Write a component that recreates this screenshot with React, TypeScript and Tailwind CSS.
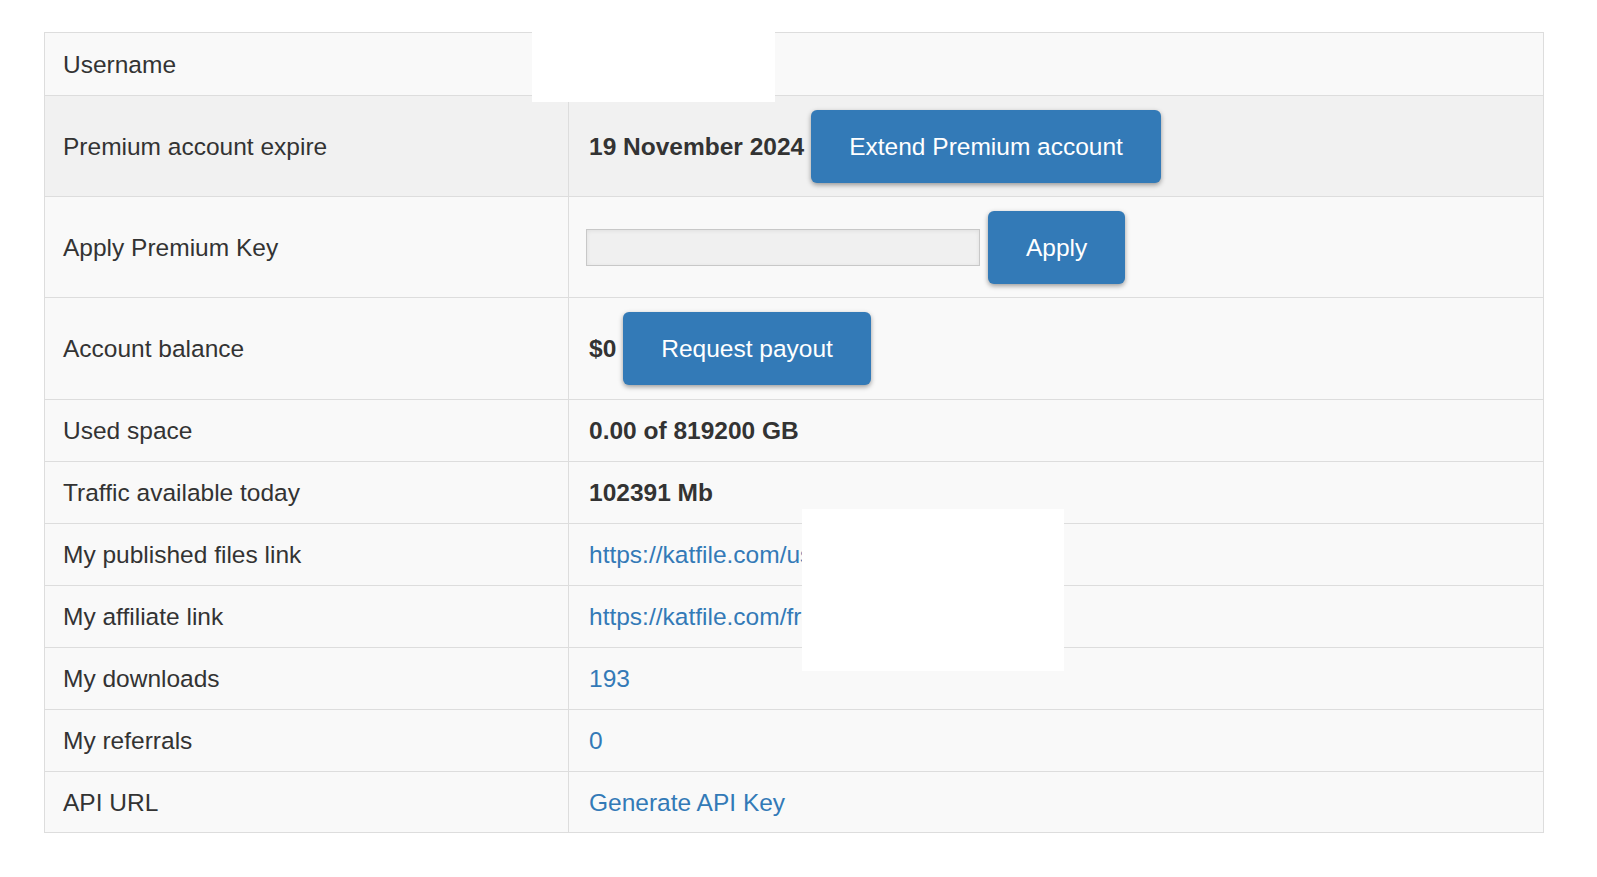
import React from "react";

function Row({
  label,
  h,
  bg,
  first,
  children,
}: {
  label: string;
  h: string;
  bg: string;
  first?: boolean;
  children?: React.ReactNode;
}) {
  return (
    <div className={`flex ${h} ${bg} ${first ? "" : "border-t border-[#dddddd]"}`}>
      <div className="flex w-[523px] shrink-0 items-center pl-[18px]">{label}</div>
      <div className="flex flex-1 items-center border-l border-[#dddddd] pl-[20px]">{children}</div>
    </div>
  );
}

function Btn({ children }: { children: React.ReactNode }) {
  return (
    <button className="rounded-[6px] bg-[#337ab7] px-[38px] py-[19px] text-[24.5px] leading-[35px] text-white shadow-[0_2px_5px_rgba(0,0,0,0.38)]">
      {children}
    </button>
  );
}

export default function App() {
  return (
    <div className="relative min-h-screen bg-white font-['Liberation_Sans',Arial,sans-serif] text-[24.5px] leading-[35px] text-[#333333]">
      <div className="pl-[44px] pt-[32px]">
        <div className="w-[1500px] border border-[#dddddd]">
          <Row label="Username" h="h-[62px]" bg="bg-[#f9f9f9]" first>
            <span></span>
          </Row>
          <Row label="Premium account expire" h="h-[101px]" bg="bg-[#f1f1f1]">
            <div className="flex items-center gap-[7px]">
              <b className="font-bold">19 November 2024</b>
              <Btn>Extend Premium account</Btn>
            </div>
          </Row>
          <Row label="Apply Premium Key" h="h-[101px]" bg="bg-[#f9f9f9]">
            <div className="-ml-[3px] flex items-center gap-[8px]">
              <input
                type="text"
                className="h-[37px] w-[394px] border border-[#c8c8c8] bg-[#f0f0f0] shadow-[inset_0_1px_4px_rgba(0,0,0,0.07)] outline-none"
              />
              <Btn>Apply</Btn>
            </div>
          </Row>
          <Row label="Account balance" h="h-[102px]" bg="bg-[#f9f9f9]">
            <div className="flex items-center gap-[7px]">
              <b className="font-bold">$0</b>
              <Btn>Request payout</Btn>
            </div>
          </Row>
          <Row label="Used space" h="h-[62px]" bg="bg-[#f9f9f9]">
            <b className="font-bold">0.00 of 819200 GB</b>
          </Row>
          <Row label="Traffic available today" h="h-[62px]" bg="bg-[#f9f9f9]">
            <b className="font-bold">102391 Mb</b>
          </Row>
          <Row label="My published files link" h="h-[62px]" bg="bg-[#f9f9f9]">
            <a className="text-[#337ab7]" href="#">https://katfile.com/users/user</a>
          </Row>
          <Row label="My affiliate link" h="h-[62px]" bg="bg-[#f9f9f9]">
            <a className="text-[#337ab7]" href="#">https://katfile.com/free</a>
          </Row>
          <Row label="My downloads" h="h-[62px]" bg="bg-[#f9f9f9]">
            <a className="text-[#337ab7]" href="#">193</a>
          </Row>
          <Row label="My referrals" h="h-[62px]" bg="bg-[#f9f9f9]">
            <a className="text-[#337ab7]" href="#">0</a>
          </Row>
          <Row label="API URL" h="h-[61px]" bg="bg-[#f9f9f9]">
            <a className="text-[#337ab7]" href="#">Generate API Key</a>
          </Row>
        </div>
      </div>
      <div className="absolute left-[532px] top-[26px] h-[76px] w-[243px] bg-white" />
      <div className="absolute left-[802px] top-[509px] h-[162px] w-[262px] bg-white" />
    </div>
  );
}
